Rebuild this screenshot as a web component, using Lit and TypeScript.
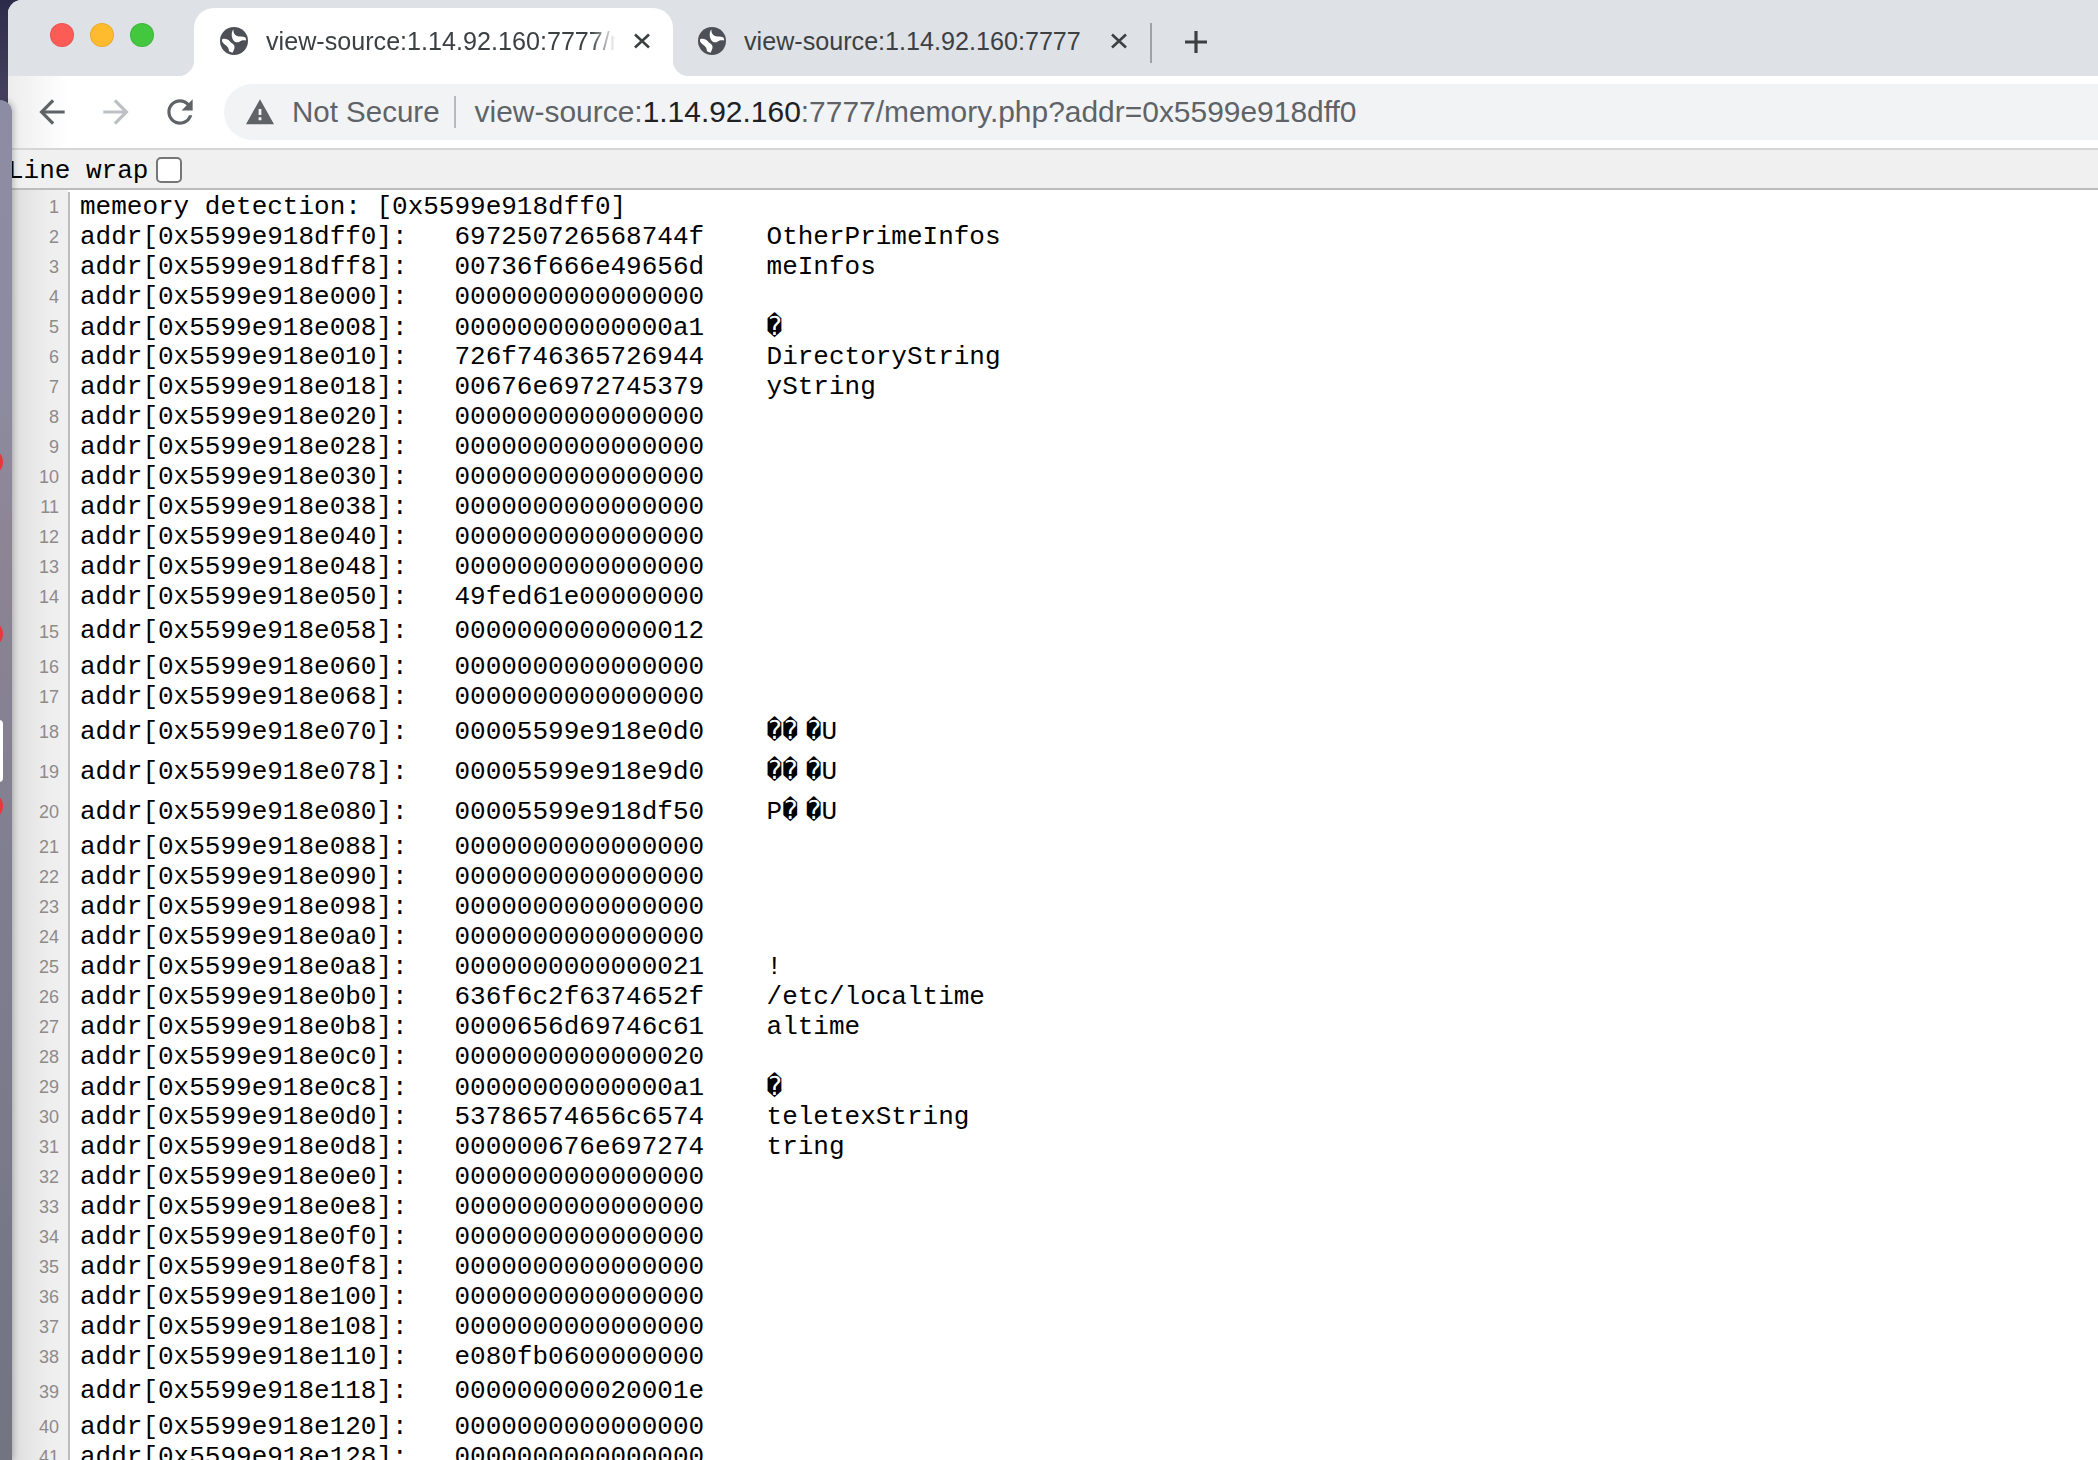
import { LitElement, html, css, svg } from "lit";
import { customElement } from "lit/decorators.js";

const Z = "0000000000000000";
type Row = [string, string?];
const R = "\uFFFD";
const rows: Row[] = [
  ["697250726568744f", "OtherPrimeInfos"],
  ["00736f666e49656d", "meInfos"],
  [Z],
  ["00000000000000a1", R],
  ["726f746365726944", "DirectoryString"],
  ["00676e6972745379", "yString"],
  [Z], [Z], [Z], [Z], [Z], [Z],
  ["49fed61e00000000"],
  ["0000000000000012"],
  [Z], [Z],
  ["00005599e918e0d0", `${R}${R}|${R}U`],
  ["00005599e918e9d0", `${R}${R}|${R}U`],
  ["00005599e918df50", `P${R}|${R}U`],
  [Z], [Z], [Z], [Z],
  ["0000000000000021", "!"],
  ["636f6c2f6374652f", "/etc/localtime"],
  ["0000656d69746c61", "altime"],
  ["0000000000000020"],
  ["00000000000000a1", R],
  ["53786574656c6574", "teletexString"],
  ["000000676e697274", "tring"],
  [Z], [Z], [Z], [Z], [Z], [Z],
  ["e080fb0600000000"],
  ["000000000020001e"],
  [Z], [Z],
];
const tall = new Set([15, 18, 19, 20, 39]);
const BASE = 0x5599e918dff0;

const globe = svg`<svg class="globe" viewBox="0 0 28 28"><circle cx="14" cy="14" r="14" fill="#4d5056"/><path fill="#fff" d="M13.500 2.500C13 5.500 14.500 8 17 9c2.500 1 5.500 0 8.500 1.500.4 1 .6 2 .6 3-2.600-.5-4.600 0-6.600 1.200-2.500 1.500-5 .3-6.300-1.700-1.300-2-1.700-4.500-1.400-6.800.2-1.400.6-2.800 1.700-3.700z"/><path fill="#fff" d="M2.100 12.200c3-.9 6 0 7.900 2.300 1.500 1.900 3.500 2.300 4.300 4.300.8 2-.4 4.200-1.800 6.900-1.500-.2-2.600-.8-3.500-1.400-.1-1.800-.6-3.400-1.900-4.800-1.600-1.700-3.800-2.700-5-4.900-.2-.8-.2-1.500 0-2.400z"/></svg>`;
const closeX = svg`<svg class="x" viewBox="0 0 18 16"><path d="M2 1.500 16 14.500M16 1.500 2 14.500" stroke="#3c4043" stroke-width="2.600" fill="none"/></svg>`;

@customElement("app-root")
export class AppRoot extends LitElement {
  static styles = css`
    :host { display: block; }
    .desktop { position: relative; width: 2098px; height: 1460px; overflow: hidden;
      background: linear-gradient(180deg, #2c2c4a, #45405f 100px); font-family: "Liberation Sans", Arial, sans-serif; }
    .window { margin-left: 8px; height: 1460px; background: #fff; border-top-left-radius: 14px; overflow: hidden; display: flex; flex-direction: column; }

    .panel { position: absolute; left: 0; top: 100px; width: 12px; bottom: 0; border-top-right-radius: 14px;
      background: linear-gradient(180deg, #8c8ca4 0, #8d8ba0 300px, #8d8494 450px, #7e7e90 800px, #70727f 1460px);
      box-shadow: 1px 0 7px rgba(0,0,0,.28); overflow: hidden; }
    .dot { position: absolute; left: -7px; width: 10px; height: 18px; border-radius: 50%; background: #e8383a; }
    .dot.a { top: 353px; } .dot.b { top: 525px; } .dot.c { top: 697px; }
    .white { position: absolute; left: -8px; top: 620px; width: 11px; height: 62px; border-radius: 4px; background: #fff; }

    .tabstrip { height: 76px; flex: none; background: #dee1e6; display: flex; align-items: flex-end; }
    .lights { width: 186px; height: 76px; padding-left: 42px; box-sizing: border-box; display: flex; gap: 16px; padding-top: 23px; }
    .light { width: 24px; height: 24px; border-radius: 50%; box-sizing: border-box; border: 1px solid rgba(0,0,0,.08); }
    .red { background: #fd5c56; } .yellow { background: #febb2e; } .green { background: #42c73f; }
    .tab { height: 68px; box-sizing: border-box; display: flex; align-items: center; gap: 18px; padding-bottom: 2px; font-size: 25.150px; color: #3c4043; white-space: nowrap; }
    .tab.active { position: relative; width: 479px; background: #fff; border-radius: 20px 20px 0 0; padding-left: 26px; padding-right: 22px; }
    .tab.active::before, .tab.active::after { content: ""; position: absolute; bottom: 0; width: 16px; height: 16px; }
    .tab.active::before { left: -16px; background: radial-gradient(circle at 0 0, transparent 16px, #fff 16.500px); }
    .tab.active::after { right: -16px; background: radial-gradient(circle at 100% 0, transparent 16px, #fff 16.500px); }
    .tab.other { width: 476px; padding-left: 24px; padding-right: 22px; margin-left: 1px; }
    .title { flex: 1; overflow: hidden; min-width: 0; line-height: 34px; }
    .tab.active .title { -webkit-mask-image: linear-gradient(90deg, #000 325px, transparent 350px); mask-image: linear-gradient(90deg, #000 325px, transparent 350px); }
    .globe { width: 28px; height: 28px; flex: none; }
    .x { width: 18px; height: 16px; flex: none; }
    .tabdiv { width: 2px; height: 40px; background: #9ea2a8; align-self: flex-start; margin-top: 23px; flex: none; }
    .plus { width: 24px; height: 24px; margin: 0 0 22px 32px; flex: none; }

    .toolbar { height: 72px; flex: none; box-sizing: border-box; padding-left: 12px; display: flex; align-items: center; background: linear-gradient(90deg, #ededed, #fff 60px); }
    .btn { width: 64px; display: flex; justify-content: center; align-items: center; }
    .btn svg { width: 38px; height: 38px; display: block; }
    .omni { margin-left: 12px; flex: 1; height: 56px; margin-right: -40px; border-radius: 28px; background: #f1f3f4; display: flex; align-items: center; padding-left: 22px; font-size: 29.500px; color: #5f6368; white-space: nowrap; }
    .warn { width: 28px; height: 28px; flex: none; margin-right: 18px; }
    .sep { width: 2px; height: 32px; background: #b6b9bd; margin: 0 19px 0 14px; flex: none; }
    .url { font-size: 29.950px; }
    .host { color: #202124; }

    .wrapbar { height: 42px; flex: none; box-sizing: border-box; padding-top: 4px; background: #f0f0f0; border-top: 2px solid #d6d6d6; border-bottom: 2px solid #bcbcbc; display: flex; align-items: center; font-family: "Liberation Mono", monospace; font-size: 26px; color: #000; white-space: pre; }
    .box { width: 26px; height: 26px; box-sizing: border-box; background: #fff; border: 2px solid #767676; border-radius: 5px; margin: 0 0 2px 8px; }

    .source { flex: 1; min-height: 0; padding-top: 2px; background: linear-gradient(90deg, #dcdcdc 0, #eeeeee 40px, #f0f0f0 60px, #fff 60px); }
    .row { height: 30px; display: flex; align-items: center; }
    .row.tall { height: 40px; }
    .num { box-sizing: border-box; height: 100%; flex: none; width: 62px; padding-right: 9px; padding-top: 1px; font-size: 18px; color: #8f8a8a; display: flex; align-items: center; justify-content: flex-end; border-right: 2px solid #bcbcbc; }
    .code { padding-left: 10px; font-family: "Liberation Mono", monospace; font-size: 26px; color: #000; white-space: pre; }
    .tall .code { padding-bottom: 3px; }
    .gap { display: inline-block; width: 8px; }
  `;

  private icon(d: string, fill: string) {
    return svg`<svg viewBox="0 0 24 24"><path d=${d} fill=${fill}/></svg>`;
  }

  private ascii(s: string) {
    const parts = s.split("|");
    return parts.map((p, i) => html`${i ? html`<span class="gap"></span>` : ""}${p}`);
  }

  render() {
    const back = "M20 11H7.830l5.590-5.590L12 4l-8 8 8 8 1.410-1.410L7.830 13H20v-2z";
    const fwd = "M4 11h12.170l-5.590-5.590L12 4l8 8-8 8-1.410-1.410L16.170 13H4v-2z";
    const reload = "M17.650 6.350C16.200 4.900 14.210 4 12 4c-4.420 0-7.990 3.580-7.990 8s3.570 8 7.990 8c3.730 0 6.840-2.550 7.730-6h-2.080c-.820 2.330-3.040 4-5.650 4-3.310 0-6-2.690-6-6s2.690-6 6-6c1.660 0 3.140.690 4.220 1.780L13 11h7V4l-2.350 2.350z";
    return html`
      <div class="desktop">
        <div class="window">
          <div class="tabstrip">
            <div class="lights"><div class="light red"></div><div class="light yellow"></div><div class="light green"></div></div>
            <div class="tab active">${globe}<div class="title">view-source:1.14.92.160:7777/memory.php?addr=0x5599e918dff0</div>${closeX}</div>
            <div class="tab other">${globe}<div class="title">view-source:1.14.92.160:7777</div>${closeX}</div>
            <div class="tabdiv"></div>
            <svg class="plus" viewBox="0 0 24 24"><path d="M12 1v22M1 12h22" stroke="#3c4043" stroke-width="3.200" fill="none"/></svg>
          </div>
          <div class="toolbar">
            <div class="btn">${this.icon(back, "#5f6368")}</div>
            <div class="btn">${this.icon(fwd, "#bdc1c6")}</div>
            <div class="btn">${this.icon(reload, "#5f6368")}</div>
            <div class="omni">
              <svg class="warn" viewBox="0 0 24 24"><path d="M0 22.500h24L12 1 0 22.500zm13.200-3.500h-2.400v-2.400h2.400V19zm0-4.400h-2.400V9.500h2.400v5.100z" fill="#5f6368"/></svg>
              <span>Not Secure</span><div class="sep"></div>
              <span class="url">view-source:<span class="host">1.14.92.160</span>:7777/memory.php?addr=0x5599e918dff0</span>
            </div>
          </div>
          <div class="wrapbar">Line wrap<div class="box"></div></div>
          <div class="source">
            <div class="row"><div class="num">1</div><div class="code">memeory detection: [0x5599e918dff0]</div></div>
            ${rows.map((r, i) => {
              const n = i + 2;
              const addr = (BASE + i * 8).toString(16);
              const left = `addr[0x${addr}]:   ${r[0]}`;
              return html`<div class="row ${tall.has(n) ? "tall" : ""}"><div class="num">${n}</div><div class="code">${left}${r[1] ? html`    ${this.ascii(r[1])}` : ""}</div></div>`;
            })}
          </div>
        </div>
        <div class="panel">
          <div class="dot a"></div>
          <div class="dot b"></div>
          <div class="white"></div>
          <div class="dot c"></div>
        </div>
      </div>
    `;
  }
}
